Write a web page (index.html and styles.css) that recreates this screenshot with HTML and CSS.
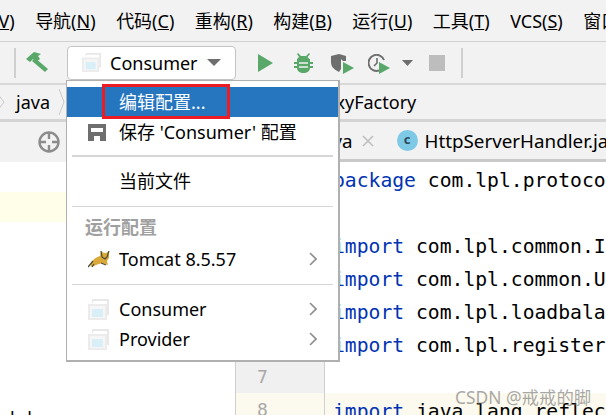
FILE: index.html
```html
<!DOCTYPE html>
<html lang="zh-CN">
<head>
<meta charset="utf-8">
<title>IDE</title>
<link rel="stylesheet" href="styles.css">
</head>
<body>
<svg class="defs" width="0" height="0">
  <symbol id="cfg" viewBox="0 0 22 21">
    <path d="M5 0h16v16h-2V2H5v2H4V0z" fill="#e8e8e8"/>
    <path d="M0 5h19v16H0z" fill="#ececec"/>
    <path d="M2 7h15v12H2z" fill="#f6f6f6"/>
    <path d="M4 10h11v8H4z" fill="#d9eff8"/>
  </symbol>
  <symbol id="chev" viewBox="0 0 8 14">
    <path d="M1 1l6 6-6 6" fill="none" stroke="#8c8c8c" stroke-width="1.600"/>
  </symbol>
</svg>

<nav class="menubar">
  <span class="m first">视图(<u>V</u>)</span>
  <span class="m">导航(<u>N</u>)</span>
  <span class="m">代码(<u>C</u>)</span>
  <span class="m">重构(<u>R</u>)</span>
  <span class="m">构建(<u>B</u>)</span>
  <span class="m">运行(<u>U</u>)</span>
  <span class="m">工具(<u>T</u>)</span>
  <span class="m">VCS(<u>S</u>)</span>
  <span class="m">窗口(<u>W</u>)</span>
</nav>

<div class="toolbar">
  <i class="tb-sep"></i>
  <svg class="i-hammer" width="23" height="21" viewBox="0 0 23 21"><path d="M0 7L8 0l7 2-3 2 2 3-4 3-3-3-3 3z" fill="#59a869"/><path d="M9 6l13 11-3 3L6 9z" fill="#59a869"/></svg>
  <div class="combo">
    <svg class="i-cfg" width="20" height="19"><use href="#cfg"/></svg>
    <span class="combo-text">Consumer</span>
    <svg class="i-caret" width="14" height="7" viewBox="0 0 14 7"><path d="M0 0h14L7 7z" fill="#6e6e6e"/></svg>
  </div>
  <svg class="i-run" width="15" height="18" viewBox="0 0 15 18"><path d="M0 0l15 9-15 9z" fill="#59a869"/></svg>
  <svg class="i-bug" width="19" height="20" viewBox="0 0 19 20"><path d="M4 0l3 3h5l3-3 1 1-2.500 3 2 2H3l2-2L3 1z" fill="#59a869"/><path d="M3 6h13v3h3v2h-3v2h3v2h-3c0 3-3 5-6.500 5S3 18 3 15H0v-2h3v-2H0V9h3z" fill="#59a869"/><path d="M5 10h9M5 14h9" stroke="#f2f2f2" stroke-width="1.500"/></svg>
  <svg class="i-cov" width="23" height="20" viewBox="0 0 23 20"><path d="M0 2l8-2 7 2v5h-3l-2-2v10l-2 3c-6-3-8-6-8-10z" fill="#6e6e6e"/><path d="M12 8l11 6-11 6z" fill="#59a869"/></svg>
  <svg class="i-prof" width="22" height="20" viewBox="0 0 22 20"><path d="M11 16.500A8 8 0 1 1 16 6" fill="none" stroke="#6e6e6e" stroke-width="2"/><path d="M9 4v5l-3 3" fill="none" stroke="#6e6e6e" stroke-width="1.600"/><path d="M11 8l11 6-11 6z" fill="#59a869"/></svg>
  <svg class="i-small" width="11" height="6" viewBox="0 0 11 6"><path d="M0 0h11L5.500 6z" fill="#6e6e6e"/></svg>
  <i class="i-stop"></i>
  <i class="tb-sep last"></i>
</div>

<div class="crumbs">
  <svg class="c-chev first" width="6" height="26" viewBox="0 0 6 26"><path d="M-6 0L4 13-6 26" fill="none" stroke="#c9c9c9"/></svg>
  <span class="crumb">java</span>
  <svg class="c-chev" width="6" height="26" viewBox="0 0 6 26"><path d="M0 0L5 13 0 26" fill="none" stroke="#c9c9c9"/></svg>
  <span class="crumb last">ProxyFactory</span>
</div>

<main class="workspace">
  <aside class="project">
    <div class="project-head">
      <svg width="24" height="24" viewBox="0 0 24 24"><circle cx="12" cy="12" r="9.500" fill="none" stroke="#8c8c8c" stroke-width="2.400"/><path d="M12 2v7M12 15v7M2 12h7M15 12h7" stroke="#8c8c8c" stroke-width="2.400"/></svg>
    </div>
    <div class="project-row"></div>
    <div class="project-row hl"></div>
    <div class="project-tail">l l</div>
  </aside>
  <section class="editor">
    <div class="tabs">
      <span class="tab">Main.java</span>
      <svg class="tab-x" width="12" height="12" viewBox="0 0 12 12"><path d="M1 1l10 10M11 1L1 11" stroke="#bdbdbd" stroke-width="1.500"/></svg>
      <span class="tab-c">c</span>
      <span class="tab">HttpServerHandler.java</span>
    </div>
    <div class="code">
      <div class="ln">1</div><div class="cl"><b>package</b> com.lpl.protocol;</div>
      <div class="ln">2</div><div class="cl"></div>
      <div class="ln">3</div><div class="cl"><b>import</b> com.lpl.common.Invocation;</div>
      <div class="ln">4</div><div class="cl"><b>import</b> com.lpl.common.URL;</div>
      <div class="ln">5</div><div class="cl"><b>import</b> com.lpl.loadbalance;</div>
      <div class="ln">6</div><div class="cl"><b>import</b> com.lpl.register;</div>
      <div class="ln">7</div><div class="cl"></div>
      <div class="ln cur">8</div><div class="cl cur"><b>import</b> java.lang.reflect;</div>
    </div>
  </section>
</main>

<div class="popup">
  <div class="item active"><span class="ic"></span><span class="lbl">编辑配置...</span></div>
  <div class="item">
    <span class="ic"><svg width="18" height="17" viewBox="0 0 18 17"><path d="M0 0h18v17H0z" fill="#6e6e6e"/><path d="M3 4h12v4H3zM6 12h6v5H6z" fill="#fff"/></svg></span>
    <span class="lbl">保存 'Consumer' 配置</span>
  </div>
  <hr class="sep">
  <div class="item"><span class="ic"></span><span class="lbl">当前文件</span></div>
  <hr class="sep thin">
  <div class="group">运行配置</div>
  <div class="item">
    <span class="ic"><svg width="22" height="18" viewBox="0 0 22 18"><path d="M2 15C4 10 8 7 12 6l1-5 3 2h2l3-2v7l-2 3 1 4-6-2-6 2-4 2z" fill="#d9a93a"/><path d="M0 17l5-6M13 1l1 6 3 2 2-2 2-6M6 14l-2 3M13 13l5 2" stroke="#4a4a3a" stroke-width="1.200" fill="none"/></svg></span>
    <span class="lbl">Tomcat 8.5.57</span>
    <svg class="more" width="8" height="14"><use href="#chev"/></svg>
  </div>
  <hr class="sep thin wide">
  <div class="item">
    <span class="ic"><svg width="22" height="21"><use href="#cfg"/></svg></span>
    <span class="lbl">Consumer</span>
    <svg class="more" width="8" height="14"><use href="#chev"/></svg>
  </div>
  <div class="item">
    <span class="ic"><svg width="22" height="21"><use href="#cfg"/></svg></span>
    <span class="lbl">Provider</span>
    <svg class="more" width="8" height="14"><use href="#chev"/></svg>
  </div>
</div>

<div class="callout"></div>
<div class="watermark">CSDN @戒戒的脚</div>
</body>
</html>
```
FILE: styles.css
```css
* { box-sizing: border-box; }
html, body { margin: 0; height: 415px; overflow: hidden; }
body {
  position: relative;
  width: 606px;
  background: #fff;
  color: #000;
  font-family: "Noto Sans", "Noto Sans CJK SC", sans-serif;
  font-size: 18px;
  line-height: 24px;
}
.defs { position: absolute; }

.menubar {
  display: flex;
  height: 42px;
  align-items: center;
  gap: 20.500px;
  overflow: hidden;
  background: #f2f2f2;
  border-bottom: 1px solid #d0d0d0;
  white-space: nowrap;
}
.m { flex: none; }
.m.first { margin-left: -43px; }

.toolbar {
  display: flex;
  height: 43px;
  align-items: center;
  padding-left: 14px;
  background: #f2f2f2;
  border-bottom: 2px solid #d8d8d8;
}
.tb-sep { flex: none; width: 2px; height: 30px; background: #cfcfcf; }
.tb-sep.last { margin-left: 16px; }
.i-hammer { flex: none; margin-left: 10px; }
.combo {
  flex: none;
  display: flex;
  align-items: center;
  width: 169px;
  height: 34px;
  margin-left: 18px;
  padding-left: 14px;
  background: #fff;
  border: 1px solid #c4c4c4;
  border-radius: 4px;
}
.combo-text { margin-left: 8px; width: 97px; }
.i-run { flex: none; margin-left: 22px; }
.i-bug { flex: none; margin-left: 21px; }
.i-cov { flex: none; margin-left: 18px; margin-top: 2px; }
.i-prof { flex: none; margin-left: 14px; margin-top: 2px; }
.i-small { flex: none; margin-left: 12px; }
.i-stop { flex: none; width: 16px; height: 16px; margin-left: 16px; background: #bdbdbd; }

.crumbs {
  display: flex;
  height: 37px;
  align-items: center;
  overflow: hidden;
  background: #f2f2f2;
  border-bottom: 3px solid #d4d4d4;
}
.c-chev { flex: none; }
.crumb { margin-left: 10px; margin-right: 9px; }
.crumb.last { margin-left: 242px; }

.workspace { display: flex; height: 293px; }
.project { flex: none; width: 235px; overflow: hidden; }
.project-head {
  display: flex;
  align-items: center;
  height: 40px;
  padding-left: 37px;
  background: #f2f2f2;
}
.project-row { height: 30px; }
.project-row.hl { background: #fffee8; }
.project-tail { margin-top: 184px; padding-left: 10px; word-spacing: 8px; }

.editor { flex: none; width: 371px; overflow: hidden; border-left: 1px solid #cfcfcf; }
.tabs {
  display: flex;
  align-items: center;
  height: 40px;
  padding-left: 32px;
  overflow: hidden;
  background: #f2f2f2;
  border-bottom: 3px solid #c9c9c9;
  white-space: nowrap;
}
.tab { flex: none; font-size: 18.800px; }
.tab-x { flex: none; margin-left: 9px; }
.tab-c {
  flex: none;
  width: 21px;
  height: 21px;
  margin-left: 23px;
  margin-right: 7px;
  border-radius: 50%;
  background: #7ecae6;
  color: #2b4a58;
  text-align: center;
  font-size: 13px;
  line-height: 19px;
  font-weight: 700;
}
.code {
  display: grid;
  grid-template-columns: 89px 1fr;
  grid-auto-rows: 33px;
  overflow: hidden;
  font-family: "DejaVu Sans Mono", monospace;
  font-size: 19.700px;
  line-height: 33px;
  white-space: pre;
}
.ln { background: #f0f0f0; border-right: 1px solid #cfcfcf; padding-left: 21px; color: #a8a8a8; font-size: 18px; }
.cl { padding-left: 8px; padding-top: 2px; overflow: hidden; }
.cl b { font-weight: 400; color: #0033b3; }
.cur { background: #fcf9ee; }

.popup {
  position: absolute;
  left: 66px;
  top: 80px;
  width: 274px;
  height: 282px;
  padding-top: 6px;
  background: #fff;
  border: 1px solid #b0b0b0;
  border-width: 1px 2px 2px 1px;
}
.item {
  display: flex;
  align-items: center;
  height: 30px;
  padding: 0 21px 0 21px;
}
.item.active { background: #2675bf; color: #fff; }
.ic { flex: none; display: flex; align-items: center; width: 31px; height: 21px; }
.lbl { flex: 1; white-space: nowrap; }
.more { flex: none; }
.sep { height: 2px; margin: 8px 5px 9px; border: 0; background: #d6d6d6; }
.sep.thin { height: 1px; margin: 10px 5px 5px; }
.sep.thin.wide { margin-bottom: 9px; }
.group { height: 30px; padding-left: 18px; color: #a0a0a0; font-size: 18px; font-weight: 700; line-height: 30px; }
.group + .item { margin-top: 2px; }

.callout {
  position: absolute;
  left: 102px;
  top: 84px;
  width: 128px;
  height: 35px;
  border: 3px solid #ed1c24;
}
.watermark {
  position: absolute;
  left: 455px;
  top: 385px;
  color: rgba(110, 110, 110, 0.6);
  font-size: 17.400px;
  white-space: nowrap;
}
```
